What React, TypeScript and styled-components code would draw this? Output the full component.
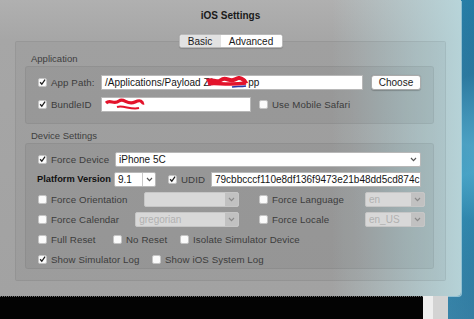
import React from 'react';
import styled, { createGlobalStyle } from 'styled-components';

const Global = createGlobalStyle`
  *, *::before, *::after { box-sizing: border-box; }
  html, body { margin: 0; padding: 0; background: #000; }
  body { font-family: "Liberation Sans", Arial, sans-serif; }
`;

const Screen = styled.div`
  width: 474px;
  height: 319px;
  overflow: hidden;
  display: flex;
  flex-direction: column;
  background:
    linear-gradient(200deg, rgba(110,190,220,0) 0%, rgba(110,190,220,0.45) 30%, rgba(110,190,220,0) 45%, rgba(110,190,220,0.4) 70%, rgba(110,190,220,0) 85%),
    linear-gradient(160deg, #155a80 0%, #2a84ad 30%, #17638c 50%, #3a98bd 70%, #1a6088 100%);
`;

const Window = styled.div`
  flex: none;
  width: 461px;
  height: 296px;
  display: flex;
  flex-direction: column;
  padding: 0 15px 15px 15px;
  border-bottom-right-radius: 4px;
  background:
    linear-gradient(to right, rgba(186, 222, 228, 0) 72%, rgba(186, 222, 228, 0.8) 100%),
    linear-gradient(to bottom, #b0b0b0 0px, #a6a6a6 40px, #a2a2a2 100%);
  box-shadow: 1px 1px 0 rgba(210, 235, 240, 0.6);
`;

const Title = styled.div`
  height: 34px;
  padding-top: 10px;
  line-height: 12px;
  text-align: center;
  font-size: 10px;
  font-weight: bold;
  color: #1a1a1a;
`;

const TabBar = styled.div`
  display: flex;
  justify-content: center;
  position: relative;
  z-index: 1;
`;

const Segmented = styled.div`
  display: flex;
  height: 14px;
  border: 1px solid #b9b9b9;
  border-radius: 3px;
  background: #fff;
  overflow: hidden;
  box-shadow: 0 0.5px 1px rgba(0,0,0,0.15);
`;

const Segment = styled.div<{ $active?: boolean; $w: number }>`
  width: ${p => p.$w}px;
  display: flex;
  align-items: center;
  justify-content: center;
  font-size: 10px;
  color: #1a1a1a;
  background: ${p => (p.$active ? '#e2e2e2' : '#ffffff')};
`;

const TabBox = styled.div`
  flex: 1;
  margin-top: -7px;
  display: flex;
  flex-direction: column;
  padding: 11px 11px 0 9px;
  background: rgba(0, 0, 0, 0.035);
  border: 1px solid rgba(0, 0, 0, 0.06);
  border-radius: 2px;
`;

const SectionLabel = styled.div<{ $mt?: number }>`
  height: 11px;
  line-height: 11px;
  font-size: 9.5px;
  color: #3e3e3e;
  padding-left: 6px;
  margin-top: ${p => p.$mt ?? 0}px;
  margin-bottom: 2px;
`;

const Group = styled.div<{ $pad: string; $gap: number }>`
  display: flex;
  flex-direction: column;
  gap: ${p => p.$gap}px;
  padding: ${p => p.$pad};
  background: rgba(0, 0, 0, 0.045);
  border: 1px solid rgba(0, 0, 0, 0.05);
  border-radius: 3px;
`;

const Row = styled.div`
  display: flex;
  align-items: center;
  height: 14px;
`;

const Cell = styled.div<{ $w?: number; $gap?: number; $ml?: number }>`
  display: flex;
  align-items: center;
  flex: none;
  width: ${p => (p.$w ? `${p.$w}px` : 'auto')};
  gap: ${p => p.$gap ?? 0}px;
  margin-left: ${p => p.$ml ?? 0}px;
`;

const Box = styled.span`
  flex: none;
  width: 9px;
  height: 9px;
  border-radius: 2px;
  background: #fbfbfb;
  border: 0.5px solid #c4c4c4;
  display: flex;
  align-items: center;
  justify-content: center;
`;

const CheckText = styled.span`
  margin-left: 4px;
  font-size: 9.7px;
  color: #3c3c3c;
  white-space: nowrap;
  letter-spacing: 0.1px;
`;

const BoldLabel = styled.span`
  font-size: 9.3px;
  font-weight: bold;
  color: #111;
  white-space: nowrap;
`;

const Field = styled.div<{ $w?: number }>`
  height: 15px;
  flex: ${p => (p.$w ? 'none' : '1')};
  width: ${p => (p.$w ? `${p.$w}px` : 'auto')};
  min-width: 0;
  display: flex;
  align-items: center;
  padding: 0 3px;
  background: #fff;
  border: 0.5px solid #b8b8b8;
  font-size: 10px;
  color: #151515;
  white-space: nowrap;
  overflow: hidden;
`;

const Button = styled.div`
  flex: none;
  width: 50px;
  height: 15px;
  margin-left: 8px;
  display: flex;
  align-items: center;
  justify-content: center;
  background: #fdfdfd;
  border: 0.5px solid #aaa;
  border-radius: 3px;
  font-size: 10px;
  color: #1a1a1a;
  box-shadow: 0 0.5px 1px rgba(0,0,0,0.2);
`;

const Select = styled.div<{ $w?: number; $disabled?: boolean }>`
  height: 15px;
  flex: ${p => (p.$w ? 'none' : '1')};
  width: ${p => (p.$w ? `${p.$w}px` : 'auto')};
  min-width: 0;
  display: flex;
  align-items: stretch;
  background: ${p => (p.$disabled ? '#d8d8d8' : '#fff')};
  border: 0.5px solid ${p => (p.$disabled ? '#c6c6c6' : '#b8b8b8')};
  border-radius: 2px;
  overflow: hidden;
`;

const SelectValue = styled.span<{ $disabled?: boolean }>`
  flex: 1;
  display: flex;
  align-items: center;
  padding-left: 3px;
  font-size: 10px;
  color: ${p => (p.$disabled ? '#b1b1b1' : '#151515')};
  white-space: nowrap;
`;

const Arrow = styled.span<{ $disabled?: boolean; $divider?: boolean }>`
  flex: none;
  width: 13px;
  display: flex;
  align-items: center;
  justify-content: center;
  background: ${p => (p.$disabled ? '#c1c1c1' : 'transparent')};
  border-left: ${p => (p.$divider ? '0.5px solid #c8c8c8' : 'none')};
`;

const Scribble = styled.svg<{ $ml?: number }>`
  flex: none;
  margin-left: ${p => p.$ml ?? 0}px;
`;

const Bottom = styled.div`
  flex: 1;
  display: flex;
`;

const Terminal = styled.div`
  width: 423px;
  background: #030303;
  border-top: 1px dotted #6a6a6a;
`;

const Gutter = styled.div<{ $w: number; $c: string }>`
  width: ${p => p.$w}px;
  background: ${p => p.$c};
`;

const Chevron = ({ disabled }: { disabled?: boolean }) => (
  <svg width="7" height="5" viewBox="0 0 7 5">
    <path d="M1 1 L3.5 3.6 L6 1" fill="none" stroke={disabled ? '#8a8a8a' : '#555'} strokeWidth="1.2" />
  </svg>
);

const Check = ({ on, label, w, ml }: { on?: boolean; label: string; w?: number; ml?: number }) => (
  <Cell $w={w} $ml={ml}>
    <Box>
      {on && (
        <svg width="8" height="8" viewBox="0 0 8 8">
          <path d="M1.3 4.3 L3.2 6.6 L6.9 1.2" fill="none" stroke="#1e1e1e" strokeWidth="1.5" />
        </svg>
      )}
    </Box>
    <CheckText>{label}</CheckText>
  </Cell>
);

const Drop = ({ value, w, disabled, divider }: { value: string; w?: number; disabled?: boolean; divider?: boolean }) => (
  <Select $w={w} $disabled={disabled}>
    <SelectValue $disabled={disabled}>{value}</SelectValue>
    <Arrow $disabled={disabled} $divider={divider}>
      <Chevron disabled={disabled} />
    </Arrow>
  </Select>
);

export default function App() {
  return (
    <Screen>
      <Global />
      <Window>
        <Title>iOS Settings</Title>
        <TabBar>
          <Segmented>
            <Segment $active $w={41}>Basic</Segment>
            <Segment $w={61}>Advanced</Segment>
          </Segmented>
        </TabBar>
        <TabBox>
          <SectionLabel>Application</SectionLabel>
          <Group $pad="8px 12px 12px 12px" $gap={8}>
            <Row>
              <Check on label="App Path:" w={63} />
              <Field>
                /Applications/Payload Z/
                <Scribble $ml={-6} width="42" height="13" viewBox="0 0 42 13">
                  <path d="M1 5 C6 2 10 8 15 4 S24 7 30 3 S38 7 41 5" fill="none" stroke="#e3132b" strokeWidth="4" />
                  <path d="M2 8 C10 6 20 10 40 7" fill="none" stroke="#e3132b" strokeWidth="3.5" />
                  <path d="M26 11 C30 10 34 11 40 10" fill="none" stroke="#2a3aa8" strokeWidth="1.6" />
                </Scribble>
                pp
              </Field>
              <Button>Choose</Button>
            </Row>
            <Row>
              <Check on label="BundleID" w={63} />
              <Field $w={150}>
                <Scribble width="40" height="14" viewBox="0 0 40 14">
                  <path d="M1 6 C5 2 9 8 14 4 S22 9 30 5 S36 7 39 6" fill="none" stroke="#e3132b" strokeWidth="3.2" />
                  <path d="M12 10 C18 8 26 13 34 11" fill="none" stroke="#e3132b" strokeWidth="2" />
                </Scribble>
              </Field>
              <Check label="Use Mobile Safari" ml={8} />
            </Row>
          </Group>
          <SectionLabel $mt={6}>Device Settings</SectionLabel>
          <Group $pad="8px 12px 2px 12px" $gap={6}>
            <Row>
              <Check on label="Force Device" w={77} />
              <Drop value="iPhone 5C" />
            </Row>
            <Row>
              <Cell $w={77} $ml={-1}>
                <BoldLabel>Platform Version</BoldLabel>
              </Cell>
              <Drop value="9.1" w={42} divider />
              <Check on label="UDID" w={43} ml={12} />
              <Field>79cbbcccf110e8df136f9473e21b48dd5cd874c</Field>
            </Row>
            <Row>
              <Cell $w={201} $gap={16}>
                <Check label="Force Orientation" />
                <Drop value="" disabled />
              </Cell>
              <Check label="Force Language" w={106} ml={20} />
              <Drop value="en" w={60} disabled />
            </Row>
            <Row>
              <Cell $w={201} $gap={16}>
                <Check label="Force Calendar" />
                <Drop value="gregorian" disabled />
              </Cell>
              <Check label="Force Locale" w={106} ml={20} />
              <Drop value="en_US" w={60} disabled />
            </Row>
            <Row>
              <Check label="Full Reset" w={75} />
              <Check label="No Reset" w={67} />
              <Check label="Isolate Simulator Device" />
            </Row>
            <Row>
              <Check on label="Show Simulator Log" w={114} />
              <Check label="Show iOS System Log" />
            </Row>
          </Group>
        </TabBox>
      </Window>
      <Bottom>
        <Terminal />
        <Gutter $w={10} $c="#eeeeee" />
        <Gutter $w={15} $c="#d3d3d3" />
      </Bottom>
    </Screen>
  );
}
